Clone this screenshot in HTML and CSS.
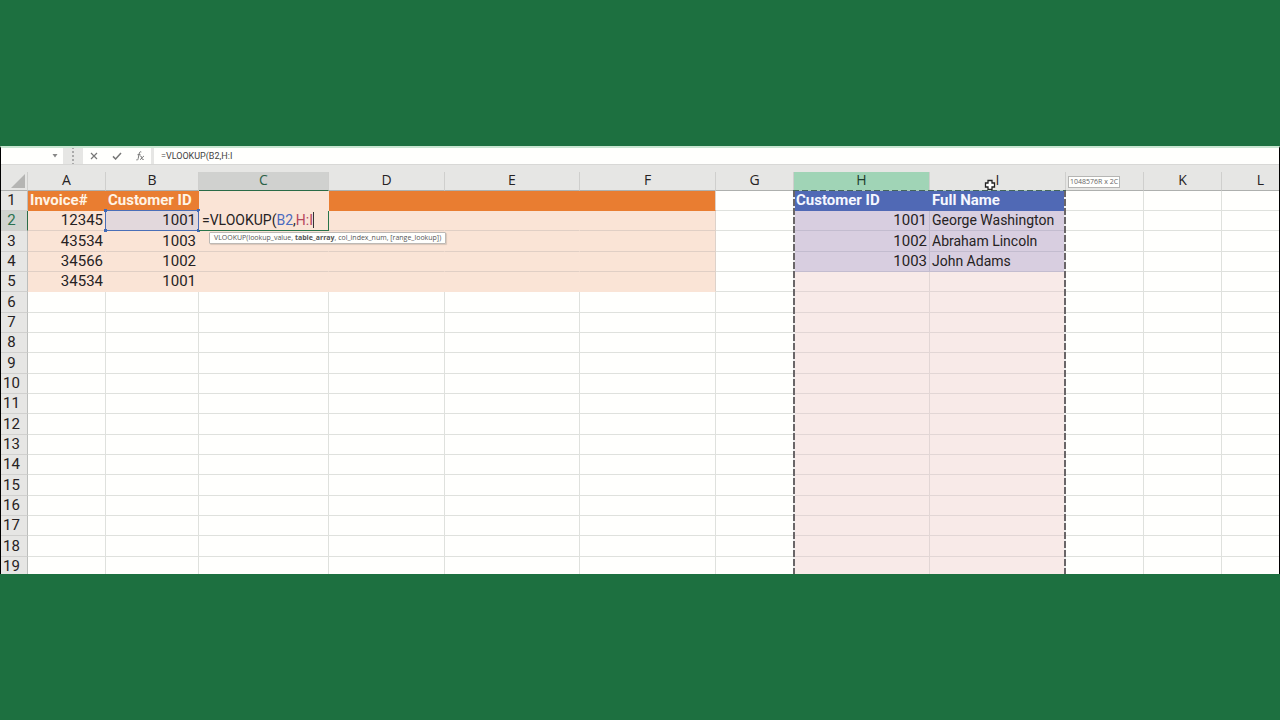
FILE: index.html
```
<!DOCTYPE html>
<html lang="en">
<head>
<meta charset="utf-8">
<title>VLOOKUP worksheet</title>
<link rel="stylesheet" href="styles.css">
</head>
<body>
<main class="sheet">
  <div class="formula-bar">
    <button class="name-box" type="button" aria-label="Name box"><svg width="6" height="4" viewBox="0 0 6 4"><path d="M0.500 0h5L3 3.500z" fill="#888"/></svg></button>
    <span class="grip" aria-hidden="true"></span>
    <div class="actions">
      <button type="button" aria-label="Cancel"><svg width="8" height="8" viewBox="0 0 8 8"><path d="M1 1l6 6M7 1L1 7" stroke="#777" stroke-width="1.2" fill="none"/></svg></button>
      <button type="button" aria-label="Enter"><svg width="10" height="8" viewBox="0 0 10 8"><path d="M1 4.4L3.6 7 9 1" stroke="#777" stroke-width="1.5" fill="none"/></svg></button>
      <button type="button" aria-label="Insert function"><svg width="10" height="10" viewBox="0 0 10 10"><path d="M6.3 1C4.8.3 4.4 1.500 4.100 3L3.200 7.500C3 9 2.300 9.300 1.300 8.800M2.500 3.700h3M5.200 5.200c1.300-.5 1.300.6 1.700 2 .3 1.300.8 1.700 1.800 1.200M8.900 5.200C7.500 5.200 6.500 8.700 5 8.500" stroke="#777" stroke-width="1" fill="none"/></svg></button>
    </div>
    <input class="formula" type="text" aria-label="Formula" value="=VLOOKUP(B2,H:I">
  </div>
  <div class="grid">
    <table>
      <colgroup><col class="w-head"><col class="w-s"><col class="w-b"><col class="w-c"><col class="w-d"><col class="w-e"><col class="w-l"><col class="w-s"><col class="w-l"><col class="w-l"><col class="w-s"><col class="w-s"><col class="w-s"></colgroup>
      <thead>
        <tr><th class="corner"><svg width="14" height="14" viewBox="0 0 14 14"><path d="M14 0v14H0z" fill="#b5b5b3"/></svg></th><th>A</th><th>B</th><th class="active-col">C</th><th>D</th><th>E</th><th>F</th><th>G</th><th class="picked-col">H</th><th class="hover-col">I<svg class="pointer" width="12" height="12" viewBox="0 0 12 12"><path d="M4 1.500h4v2.500h2.500v4H8v2.500H4V8H1.500V4H4z" fill="#fff" stroke="#222" stroke-width="1.300"/></svg></th><th class="size-host"><span class="size-tip">1048576R x 2C</span></th><th>K</th><th>L</th></tr>
      </thead>
      <tbody>
        <tr><th>1</th><td class="orange">Invoice#</td><td class="orange">Customer ID</td><td class="peach open"></td><td class="orange"></td><td class="orange"></td><td class="orange end"></td><td></td><td class="blue range-host">Customer ID<span class="ants"></span></td><td class="blue">Full Name</td><td></td><td></td><td></td></tr>
        <tr><th class="active-row">2</th><td class="peach num">12345</td><td class="peach num ref">1001<span class="ref-box"><i></i><i></i><i></i><i></i></span></td><td class="peach edit"><div class="editor" contenteditable="true" role="textbox" aria-label="Cell C2">=VLOOKUP(<span class="t-blue">B2</span>,<span class="t-red">H:I</span><span class="caret"></span></div><div class="hint">VLOOKUP(lookup_value, <b>table_array</b>, col_index_num, [range_lookup])</div></td><td class="peach"></td><td class="peach"></td><td class="peach end"></td><td></td><td class="lilac num">1001</td><td class="lilac">George Washington</td><td></td><td></td><td></td></tr>
        <tr><th>3</th><td class="peach num">43534</td><td class="peach num">1003</td><td class="peach"></td><td class="peach"></td><td class="peach"></td><td class="peach end"></td><td></td><td class="lilac num">1002</td><td class="lilac">Abraham Lincoln</td><td></td><td></td><td></td></tr>
        <tr><th>4</th><td class="peach num">34566</td><td class="peach num">1002</td><td class="peach"></td><td class="peach"></td><td class="peach"></td><td class="peach end"></td><td></td><td class="lilac num">1003</td><td class="lilac">John Adams</td><td></td><td></td><td></td></tr>
        <tr><th>5</th><td class="peach open num">34534</td><td class="peach open num">1001</td><td class="peach open"></td><td class="peach open"></td><td class="peach open"></td><td class="peach open end"></td><td></td><td class="pink"></td><td class="pink"></td><td></td><td></td><td></td></tr>
        <tr><th>6</th><td></td><td></td><td></td><td></td><td></td><td></td><td></td><td class="pink"></td><td class="pink"></td><td></td><td></td><td></td></tr>
        <tr><th>7</th><td></td><td></td><td></td><td></td><td></td><td></td><td></td><td class="pink"></td><td class="pink"></td><td></td><td></td><td></td></tr>
        <tr><th>8</th><td></td><td></td><td></td><td></td><td></td><td></td><td></td><td class="pink"></td><td class="pink"></td><td></td><td></td><td></td></tr>
        <tr><th>9</th><td></td><td></td><td></td><td></td><td></td><td></td><td></td><td class="pink"></td><td class="pink"></td><td></td><td></td><td></td></tr>
        <tr><th>10</th><td></td><td></td><td></td><td></td><td></td><td></td><td></td><td class="pink"></td><td class="pink"></td><td></td><td></td><td></td></tr>
        <tr><th>11</th><td></td><td></td><td></td><td></td><td></td><td></td><td></td><td class="pink"></td><td class="pink"></td><td></td><td></td><td></td></tr>
        <tr><th>12</th><td></td><td></td><td></td><td></td><td></td><td></td><td></td><td class="pink"></td><td class="pink"></td><td></td><td></td><td></td></tr>
        <tr><th>13</th><td></td><td></td><td></td><td></td><td></td><td></td><td></td><td class="pink"></td><td class="pink"></td><td></td><td></td><td></td></tr>
        <tr><th>14</th><td></td><td></td><td></td><td></td><td></td><td></td><td></td><td class="pink"></td><td class="pink"></td><td></td><td></td><td></td></tr>
        <tr><th>15</th><td></td><td></td><td></td><td></td><td></td><td></td><td></td><td class="pink"></td><td class="pink"></td><td></td><td></td><td></td></tr>
        <tr><th>16</th><td></td><td></td><td></td><td></td><td></td><td></td><td></td><td class="pink"></td><td class="pink"></td><td></td><td></td><td></td></tr>
        <tr><th>17</th><td></td><td></td><td></td><td></td><td></td><td></td><td></td><td class="pink"></td><td class="pink"></td><td></td><td></td><td></td></tr>
        <tr><th>18</th><td></td><td></td><td></td><td></td><td></td><td></td><td></td><td class="pink"></td><td class="pink"></td><td></td><td></td><td></td></tr>
        <tr class="last"><th>19</th><td></td><td></td><td></td><td></td><td></td><td></td><td></td><td class="pink"></td><td class="pink"></td><td></td><td></td><td></td></tr>
      </tbody>
    </table>
  </div>
</main>
</body>
</html>
```
FILE: styles.css
```
* { box-sizing: border-box; }
body {
  margin: 0;
  min-height: 100vh;
  display: flex;
  flex-direction: column;
  justify-content: center;
  background: #1d7040;
  font-family: Roboto, "Liberation Sans", sans-serif;
  color: #262223;
}
.sheet {
  background: #e6e6e4;
  border-top: 2px solid #c9e6d2;
  border-left: 1px solid #000;
  border-right: 1px solid #000;
  overflow: hidden;
}
button { border: 0; padding: 0; background: #fffffd; display: flex; align-items: center; justify-content: center; }

.formula-bar { display: flex; height: 16px; }
.name-box { width: 62px; justify-content: flex-end; padding-right: 5px; }
.grip { width: 20px; background: radial-gradient(circle, #aaa 1px, transparent 1px) center / 4px 4px repeat-y; }
.actions { display: flex; width: 68px; background: #fffffd; }
.actions button { flex: 1; }
.formula {
  flex: 1;
  min-width: 0;
  margin-left: 3px;
  border: 0;
  padding: 0 0 0 7px;
  background: #fffffd;
  font: 9px Roboto, sans-serif;
  color: #444;
  outline: 0;
}

.grid { overflow: hidden; padding-top: 7px; border-top: 1px solid #d8d8d6; }
table { width: 1299px; table-layout: fixed; border-collapse: separate; border-spacing: 0; }
.w-head { width: 27px; }
.w-s { width: 78px; }
.w-b { width: 93px; }
.w-c { width: 130px; }
.w-d { width: 116px; }
.w-e { width: 135px; }
.w-l { width: 136px; }
tr { height: 20px; }
tbody tr:nth-child(3n) { height: 21px; }
thead tr { height: 19px; }
th, td {
  padding: 0;
  font-size: 14px;
  line-height: 17px;
  font-weight: 400;
  white-space: nowrap;
  vertical-align: middle;
}
td {
  background: #fffffd;
  border-right: 1px solid #dfe1dd;
  border-bottom: 1px solid #dfe1dd;
  padding: 0 2px;
}
thead th {
  position: relative;
  border-right: 1px solid #cfcfcd;
  border-bottom: 1px solid #aeb0ae;
  font-family: "Open Sans", sans-serif;
  line-height: 16px;
  padding-bottom: 2px;
}
tbody th { border-right: 1px solid #bcbebc; border-bottom: 1px solid #d0d0ce; padding-right: 5px; font-size: 15px; }
tbody tr.last { height: 17px; }
.last th, .last td { line-height: 16px; border-bottom: 0; }
thead .corner { text-align: right; padding: 0 2px 0 0; }
.corner svg { display: block; margin-left: auto; }
.active-col { background: #d0d1cf; color: #2b6247; border-bottom-color: #2a6b47; }
.active-row { background: #d0d4cf; color: #2b7250; border-right-color: #2a6b47; }
.picked-col { background: #a0d4b6; color: #1d3d2d; }
.num { text-align: right; font-size: 15px; }
.orange { background: #e97d31; color: #fff4e6; font-weight: 700; border-color: #e97d31; font-size: 15px; }
.peach { background: #fae4d6; border-color: #fae4d6; border-bottom-color: #e0cfc5; }
.open { border-bottom-color: #fae4d6; }
.end { border-right-color: #ddd2ca; }
.blue { background: #5069b5; color: #f5f7ff; font-weight: 700; border-color: #5069b5; font-size: 15px; }
.lilac { background: #d8cee0; border-color: #c3bccf; }
.pink { background: #f8eae8; border-color: #e2d6d5; }

.ref, .edit, .range-host { position: relative; }
.ref { background: #e2d8dc; }
.ref-box { position: absolute; inset: -1px; border: 1px solid #4a6fb8; }
.ref-box i { position: absolute; width: 3px; height: 3px; background: #4069b6; }
.ref-box i:nth-child(1) { top: -2px; left: -2px; }
.ref-box i:nth-child(2) { top: -2px; right: -2px; }
.ref-box i:nth-child(3) { bottom: -2px; left: -2px; }
.ref-box i:nth-child(4) { bottom: -2px; right: -2px; }
.edit { border-right: 1px solid #28744a; border-bottom: 1px solid #28744a; padding-left: 3px; }
.editor { outline: 0; }
.t-blue { color: #4a6bc0; }
.t-red { color: #b5475c; }
.caret { border-right: 1px solid #333; }
.hint {
  position: absolute;
  z-index: 2;
  top: 21px;
  left: 10px;
  padding: 0 4px;
  background: #fffffd;
  border: 1px solid #bdb9b5;
  border-radius: 1px;
  box-shadow: 1px 1px 1px #0002;
  font: 7px/10px "Open Sans", sans-serif;
  color: #555;
}
.ants {
  position: absolute;
  z-index: 1;
  top: -1px;
  left: -1px;
  width: 273px;
  height: 384px;
  background:
    repeating-linear-gradient(90deg, #44645a 0 6px, #a9c9ba 6px 9px) top / 100% 1px no-repeat,
    repeating-linear-gradient(#6a6668 0 7px, #eee 7px 9px) left / 2px 100% no-repeat,
    repeating-linear-gradient(#6a6668 0 7px, #eee 7px 9px) right / 2px 100% no-repeat;
}
.pointer { position: absolute; left: 54px; top: 7px; }
.size-tip {
  position: absolute;
  left: 2px;
  top: 4px;
  padding: 0 1px;
  background: #fffffd;
  border: 1px solid #b5b5b3;
  font: 7px/10px "Open Sans", sans-serif;
  color: #666;
}
```
